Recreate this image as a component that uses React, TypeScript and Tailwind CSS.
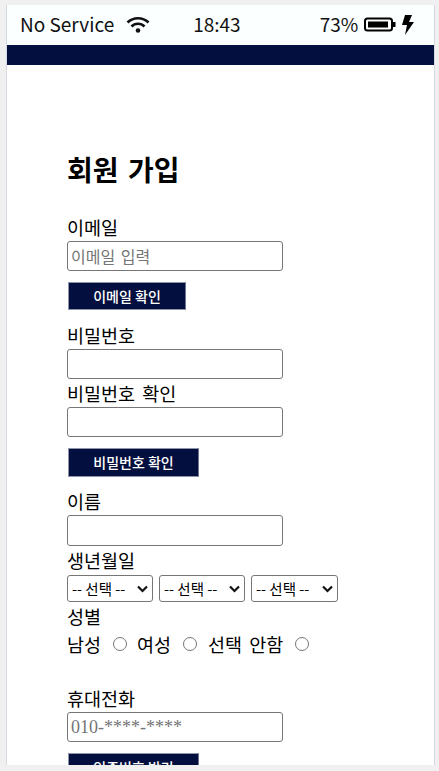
import React from "react";
const F = "[font-family:'Noto_Sans_CJK_KR','Noto_Sans',sans-serif]";
function Label({ t, cls = "" }: { t: string; cls?: string }) {
  return <div className={`text-[18.5px] leading-[28px] [word-spacing:3px] ${cls}`}>{t}</div>;
}
function Btn({ w, t, h = "h-[28px]" }: { w: string; t: string; h?: string }) {
  return <button className={`block ml-[1px] ${h} ${w} bg-[#030f3e] border border-[#8f94ab] border-r-[#6f7590] text-white text-[14px] font-medium`}>{t}</button>;
}
function Input({ p, serif, h = "h-[30px]" }: { p?: string; serif?: boolean; h?: string }) {
  return <input placeholder={p} className={`block w-[216px] ${h} border border-[#767676] rounded-[3px] px-[3px] bg-white placeholder:text-[#757575] ${serif ? "text-[18px] [font-family:'Liberation_Serif',serif]" : "text-[16px] [word-spacing:2px]"}`} />;
}
function Sel({ w }: { w: string }) {
  return (
    <div className={`relative ${w}`}>
      <select className="block w-full h-[27px] appearance-none border border-[#767676] rounded-[3px] bg-white pl-[4px] text-[14.5px] text-black">
        <option>-- 선택 --</option>
      </select>
      <svg className="absolute right-[5px] top-[10px] pointer-events-none" width="11" height="8" viewBox="0 0 11 8">
        <path d="M1 1.5l4.5 4.5 4.5-4.5" fill="none" stroke="#111" strokeWidth="2.2" />
      </svg>
    </div>
  );
}
function Radio() {
  return <input type="radio" className="m-0 w-[14px] h-[14px] shrink-0" />;
}
export default function App() {
  return (
    <div className={`w-[439px] h-[771px] overflow-hidden bg-[#f0f0f0] pt-[5px] pl-[6px] pr-[4px] pb-[6px] text-black ${F}`}>
      <div className="h-full overflow-hidden bg-white border-x border-[#d6d9df]">
        <div className="h-[40px] bg-[#fbffff] flex items-center text-[#111] text-[19px] pl-[13px] pb-[1px]">
          <span>No Service</span>
          <svg className="ml-[12px]" width="24" height="18" viewBox="0 0 24 18">
            <path d="M1.5 6.5a15 15 0 0 1 21 0M5.5 10.5a9 9 0 0 1 13 0" fill="none" stroke="#111" strokeWidth="2.6" />
            <circle cx="12" cy="14.5" r="2.3" fill="#111" />
          </svg>
          <span className="ml-[43px]">18:43</span>
          <span className="ml-[79px]">73%</span>
          <svg className="ml-[6px]" width="32" height="16" viewBox="0 0 32 16">
            <rect x="1" y="1.5" width="27" height="12" rx="2.5" fill="none" stroke="#000" strokeWidth="2" />
            <rect x="4" y="4.5" width="20" height="6" fill="#000" />
            <rect x="29" y="5" width="2.5" height="5" fill="#000" />
          </svg>
          <svg className="ml-[5px]" width="13" height="20" viewBox="0 0 13 20"><path d="M4 0h7L8 7h5L4 20l2-10H1z" fill="#000" /></svg>
        </div>
        <div className="h-[20px] bg-[#030f3e]" />
        <div className="pl-[60px] pt-[84px]">
          <h1 className="text-[28px] font-bold leading-[40px] mb-[24px] [word-spacing:3px]">회원 가입</h1>
          <Label t="이메일" />
          <Input p="이메일 입력" />
          <div className="h-[11px]" />
          <Btn w="w-[118px]" t="이메일 확인" />
          <div className="h-[11px]" />
          <Label t="비밀번호" />
          <Input />
          <Label t="비밀번호 확인" />
          <Input />
          <div className="h-[11px]" />
          <Btn w="w-[131px]" h="h-[29px]" t="비밀번호 확인" />
          <div className="h-[10px]" />
          <Label t="이름" />
          <Input h="h-[31px]" />
          <Label t="생년월일" cls="mb-[1px]" />
          <div className="flex gap-[6px]"><Sel w="w-[86px]" /><Sel w="w-[86px]" /><Sel w="w-[87px]" /></div>
          <Label t="성별" />
          <div className="flex items-center text-[18.5px] leading-[28px] h-[28px] [word-spacing:3px]">
            <span>남성</span><span className="ml-[12px] flex"><Radio /></span>
            <span className="ml-[10px]">여성</span><span className="ml-[12px] flex"><Radio /></span>
            <span className="ml-[11px]">선택 안함</span><span className="ml-[12px] flex"><Radio /></span>
          </div>
          <div className="h-[26px]" />
          <Label t="휴대전화" />
          <Input p="010-****-****" serif />
          <div className="h-[11px]" />
          <Btn w="w-[131px]" t="인증번호 받기" />
        </div>
      </div>
    </div>
  );
}
